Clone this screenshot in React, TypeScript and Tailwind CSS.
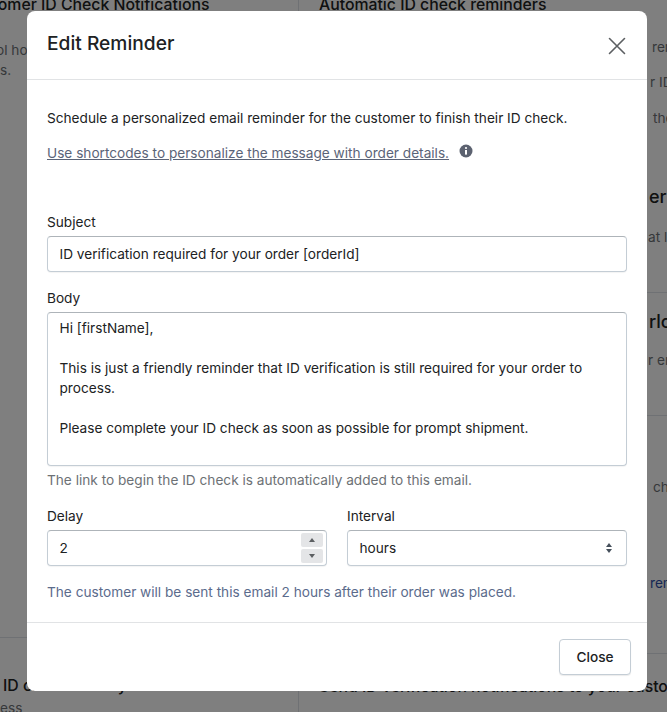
const font = { fontFamily: "Inter, 'Liberation Sans', sans-serif" };

function Line({ text, left, top, className }: { text: string; left: string; top: string; className: string }) {
  return <p className={`whitespace-nowrap leading-5 ${left} ${top} ${className}`}>{text}</p>;
}

function PageBehind() {
  return (
    <div className="grid h-full grid-cols-[298px_1fr] overflow-hidden bg-white">
      <div className="flow-root overflow-hidden">
        <div className="flow-root h-[638px] border-b border-[#dfe3e8]">
          <h2 className="-mt-[5px] -ml-[37px] whitespace-nowrap text-[15.8px] leading-5 font-medium text-[#202223]">
            Customer ID Check Notifications
          </h2>
          <p className="mt-[25px] -ml-[4px] whitespace-nowrap text-[13.65px] leading-5 text-[#6d7175]">ol how</p>
          <p className="whitespace-nowrap text-[13.65px] leading-5 text-[#6d7175]">s.</p>
        </div>
        <h2 className="mt-[38px] pl-[3px] whitespace-nowrap text-[15.8px] leading-5 font-medium text-[#202223]">
          ID checks with your own email
        </h2>
        <p className="mt-[2px] whitespace-nowrap text-[13.65px] leading-5 text-[#6d7175]">ess</p>
      </div>
      <div className="flow-root overflow-hidden border-l border-[#dfe3e8]">
        <div className="flow-root h-[293px] border-b border-[#dfe3e8]">
          <h2 className="-mt-[5px] pl-[20px] whitespace-nowrap text-[15.8px] leading-5 font-medium text-[#202223]">
            Automatic ID check reminders
          </h2>
          <Line text="rem" left="pl-[353px]" top="mt-[22px]" className="text-[13.65px] text-[#6d7175]" />
          <Line text="r ID" left="pl-[351px]" top="mt-[15px]" className="text-[13.65px] text-[#6d7175]" />
          <Line text="the" left="pl-[354px]" top="mt-[16px]" className="text-[13.65px] text-[#6d7175]" />
          <Line text="er |" left="pl-[350px]" top="mt-[59px]" className="text-lg font-medium text-[#202223]" />
          <Line text="at l" left="pl-[349px]" top="mt-[20px]" className="text-[13.65px] text-[#6d7175]" />
        </div>
        <div className="flow-root h-[123px] border-b border-[#dfe3e8]">
          <Line text="rlo" left="pl-[350px]" top="mt-[19px]" className="text-lg font-medium text-[#202223]" />
          <Line text="r em" left="pl-[349px]" top="mt-[18px]" className="text-[13.65px] text-[#6d7175]" />
        </div>
        <div className="flow-root h-[238px] border-b border-[#dfe3e8]">
          <Line text="ch" left="pl-[354px]" top="mt-[61px]" className="text-[13.65px] text-[#6d7175]" />
          <Line text="rem" left="pl-[351px]" top="mt-[76px]" className="text-[13.65px] text-[#2c4fa8]" />
        </div>
        <h2 className="mt-[23px] pl-[20px] whitespace-nowrap text-[15.8px] leading-5 font-medium text-[#202223]">
          Send ID verification notifications to your customers
        </h2>
      </div>
    </div>
  );
}

function Field({ label, children }: { label: string; children: React.ReactNode }) {
  return (
    <div>
      <label className="block text-[13.65px] leading-5 text-[#202223]">{label}</label>
      <div className="mt-1">{children}</div>
    </div>
  );
}

const boxClass =
  "flex items-center rounded-[4px] border border-[#c4cdd5] border-t-[#aeb4b9] bg-white text-[13.65px] text-[#202223] shadow-[0_1px_1px_rgba(0,0,0,0.05)]";

export default function App() {
  return (
    <div className="relative h-[712px] w-[667px] overflow-hidden" style={font}>
      <PageBehind />
      <div className="absolute inset-0 bg-black/50 pt-[11px] pl-[27px]">
        <div className="flex h-[680px] w-[620px] flex-col rounded-lg bg-white">
          <header className="flex h-[69px] shrink-0 items-center justify-between border-b border-[#e1e3e5] pr-[21px] pl-5">
            <h1 className="-mt-[4px] text-[19.2px] leading-7 font-medium text-[#202223]">Edit Reminder</h1>
            <svg width="18" height="18" viewBox="0 0 18 18" fill="none" stroke="#5c5f62" strokeWidth="1.6" strokeLinecap="round" className="mt-[1px]">
              <path d="M1.5 1.5 16.5 16.5M16.5 1.5 1.5 16.5" />
            </svg>
          </header>

          <div className="flex-1 px-5 pt-[28px]">
            <p className="text-[13.65px] leading-5 text-[#202223]">
              Schedule a personalized email reminder for the customer to finish their ID check.
            </p>
            <div className="mt-[15px] flex items-start gap-[10px]">
              <a className="text-[13.65px] leading-5 text-[#5b6478] underline">
                Use shortcodes to personalize the message with order details.
              </a>
              <svg width="14" height="14" viewBox="0 0 14 14" className="mt-[1px]">
                <circle cx="7" cy="7" r="6.5" fill="#5c6270" />
                <rect x="6" y="6" width="2" height="4.6" fill="#fff" />
                <circle cx="7" cy="4" r="1.1" fill="#fff" />
              </svg>
            </div>

            <div className="mt-[49px]">
              <Field label="Subject">
                <div className={`${boxClass} h-9 pr-3 pl-[11.5px]`}>ID verification required for your order [orderId]</div>
              </Field>
            </div>

            <div className="mt-4">
              <Field label="Body">
                <div className={`${boxClass} h-[154px] !items-start pr-3 pl-[11.5px] pt-[5px] leading-5`}>
                  <div>
                    <p>Hi [firstName],</p>
                    <p className="mt-5">
                      This is just a friendly reminder that ID verification is still required for your order to process.
                    </p>
                    <p className="mt-5">Please complete your ID check as soon as possible for prompt shipment.</p>
                  </div>
                </div>
              </Field>
              <p className="mt-1 text-[13.65px] leading-5 text-[#6d7175]">
                The link to begin the ID check is automatically added to this email.
              </p>
            </div>

            <div className="mt-[16px] grid grid-cols-2 gap-5">
              <Field label="Delay">
                <div className={`${boxClass} h-9 justify-between pr-[3px] pl-[11.5px]`}>
                  <span>2</span>
                  <div className="flex flex-col gap-[2px]">
                    <div className="flex h-[14px] w-[22px] items-center justify-center rounded-[2px] bg-[#e4e5e7]">
                      <svg width="6" height="4" viewBox="0 0 6 4"><path d="M3 0 6 4H0z" fill="#5c5f62" /></svg>
                    </div>
                    <div className="flex h-[14px] w-[22px] items-center justify-center rounded-[2px] bg-[#e4e5e7]">
                      <svg width="6" height="4" viewBox="0 0 6 4"><path d="M0 0h6L3 4z" fill="#5c5f62" /></svg>
                    </div>
                  </div>
                </div>
              </Field>
              <Field label="Interval">
                <div className={`${boxClass} h-9 justify-between pr-[14px] pl-[11.5px]`}>
                  <span>hours</span>
                  <svg width="6" height="10" viewBox="0 0 6 10">
                    <path d="M3 0 6 4H0zM0 6h6l-3 4z" fill="#454f5b" />
                  </svg>
                </div>
              </Field>
            </div>

            <p className="mt-[16px] text-[13.65px] leading-5 text-[#5b6b8c]">
              The customer will be sent this email 2 hours after their order was placed.
            </p>
          </div>

          <footer className="flex h-[69px] shrink-0 items-start justify-end border-t border-[#e1e3e5] pt-4 pr-4">
            <button className="h-9 w-[72px] rounded-[4px] border border-[#c4cdd5] bg-white text-[13.65px] font-medium text-[#202223] shadow-[0_1px_1px_rgba(0,0,0,0.08)]">
              Close
            </button>
          </footer>
        </div>
      </div>
    </div>
  );
}
